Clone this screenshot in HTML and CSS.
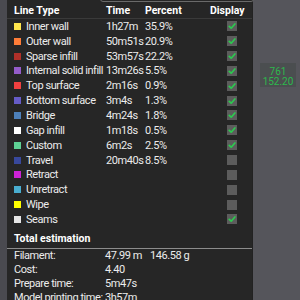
FILE: index.html
```html
<!DOCTYPE html>
<html>
<head>
<meta charset="utf-8">
<link rel="stylesheet" href="styles.css">
</head>
<body>
<div class="page">
  <div class="strip"></div>
  <div class="panel">
    <div class="combo"></div>
    <div class="grid head">
      <div>Line Type</div><div>Time</div><div>Percent</div><div>Display</div>
    </div>
    <div class="rows">
      <div class="grid row"><div class="name"><span class="sw" style="background:#FFE64D"></span>Inner wall</div><div>1h27m</div><div>35.9%</div><div><span class="cb on"><svg viewBox="0 0 10 10"><path d="M2.2 5.3 L4.2 7.2 L7.9 3"/></svg></span></div></div>
      <div class="grid row"><div class="name"><span class="sw" style="background:#FF7D38"></span>Outer wall</div><div>50m51s</div><div>20.9%</div><div><span class="cb on"><svg viewBox="0 0 10 10"><path d="M2.2 5.3 L4.2 7.2 L7.9 3"/></svg></span></div></div>
      <div class="grid row"><div class="name"><span class="sw" style="background:#B03029"></span>Sparse infill</div><div>53m57s</div><div>22.2%</div><div><span class="cb on"><svg viewBox="0 0 10 10"><path d="M2.2 5.3 L4.2 7.2 L7.9 3"/></svg></span></div></div>
      <div class="grid row"><div class="name"><span class="sw" style="background:#945CC9"></span>Internal solid infill</div><div>13m26s</div><div>5.5%</div><div><span class="cb on"><svg viewBox="0 0 10 10"><path d="M2.2 5.3 L4.2 7.2 L7.9 3"/></svg></span></div></div>
      <div class="grid row"><div class="name"><span class="sw" style="background:#F04040"></span>Top surface</div><div>2m16s</div><div>0.9%</div><div><span class="cb on"><svg viewBox="0 0 10 10"><path d="M2.2 5.3 L4.2 7.2 L7.9 3"/></svg></span></div></div>
      <div class="grid row"><div class="name"><span class="sw" style="background:#665CC7"></span>Bottom surface</div><div>3m4s</div><div>1.3%</div><div><span class="cb on"><svg viewBox="0 0 10 10"><path d="M2.2 5.3 L4.2 7.2 L7.9 3"/></svg></span></div></div>
      <div class="grid row"><div class="name"><span class="sw" style="background:#4D80BA"></span>Bridge</div><div>4m24s</div><div>1.8%</div><div><span class="cb on"><svg viewBox="0 0 10 10"><path d="M2.2 5.3 L4.2 7.2 L7.9 3"/></svg></span></div></div>
      <div class="grid row"><div class="name"><span class="sw" style="background:#FFFFFF"></span>Gap infill</div><div>1m18s</div><div>0.5%</div><div><span class="cb on"><svg viewBox="0 0 10 10"><path d="M2.2 5.3 L4.2 7.2 L7.9 3"/></svg></span></div></div>
      <div class="grid row"><div class="name"><span class="sw" style="background:#5ED194"></span>Custom</div><div>6m2s</div><div>2.5%</div><div><span class="cb on"><svg viewBox="0 0 10 10"><path d="M2.2 5.3 L4.2 7.2 L7.9 3"/></svg></span></div></div>
      <div class="grid row"><div class="name"><span class="sw" style="background:#38489B"></span>Travel</div><div>20m40s</div><div>8.5%</div><div><span class="cb"></span></div></div>
      <div class="grid row"><div class="name"><span class="sw" style="background:#CD22D6"></span>Retract</div><div></div><div></div><div><span class="cb"></span></div></div>
      <div class="grid row"><div class="name"><span class="sw" style="background:#49ADCF"></span>Unretract</div><div></div><div></div><div><span class="cb"></span></div></div>
      <div class="grid row"><div class="name"><span class="sw" style="background:#FFFF00"></span>Wipe</div><div></div><div></div><div><span class="cb"></span></div></div>
      <div class="grid row"><div class="name"><span class="sw" style="background:#E6E6E6"></span>Seams</div><div></div><div></div><div><span class="cb on"><svg viewBox="0 0 10 10"><path d="M2.2 5.3 L4.2 7.2 L7.9 3"/></svg></span></div></div>
    </div>
    <div class="total-title">Total estimation</div>
    <div class="stats">
      <div class="stat"><div>Filament:</div><div>47.99 m</div><div>146.58 g</div></div>
      <div class="stat"><div>Cost:</div><div>4.40</div><div></div></div>
      <div class="stat"><div>Prepare time:</div><div>5m47s</div><div></div></div>
      <div class="stat"><div>Model printing time:</div><div>3h57m</div><div></div></div>
    </div>
  </div>
  <div class="canvas">
    <div class="badge"><div>761</div><div>152.20</div></div>
  </div>
</div>
</body>
</html>
```
FILE: styles.css
```css
html, body {
  margin: 0;
  padding: 0;
}
body {
  width: 300px;
  height: 300px;
  overflow: hidden;
  background: #55555b;
  font-family: Roboto, "Liberation Sans", sans-serif;
  font-size: 11px;
  letter-spacing: -0.45px;
  color: #ececec;
}
.page {
  display: flex;
  height: 300px;
}
.strip {
  width: 7px;
  background: #4a4a50;
  flex: none;
}
.panel {
  width: 246px;
  flex: none;
  background: #262626;
  position: relative;
  padding-top: 3px;
  box-sizing: border-box;
  border-right: 1px solid #222;
}
.combo {
  position: absolute;
  top: -20px;
  left: 93px;
  width: 152px;
  height: 20px;
  border: 1px solid #6a6a6a;
  border-radius: 3px;
  background: #262626;
}
.grid {
  display: grid;
  grid-template-columns: 92px 39px 65px 43px;
  padding-left: 7px;
  align-items: center;
}
.head {
  height: 15px;
  font-size: 10.5px;
  font-weight: bold;
  color: #ffffff;
  letter-spacing: 0;
  border-bottom: 1px solid #3a3a3a;
}
.row {
  height: 14.85px;
  white-space: nowrap;
}
.name {
  display: flex;
  align-items: center;
}
.sw {
  width: 7px;
  height: 7px;
  margin-right: 5px;
  flex: none;
}
.cb {
  display: block;
  width: 10px;
  height: 10px;
  margin-left: 17px;
  background: #5c5c5c;
}
.cb svg {
  display: block;
  width: 10px;
  height: 10px;
}
.cb path {
  fill: none;
  stroke: #2ccb4f;
  stroke-width: 1.7;
  stroke-linecap: round;
  stroke-linejoin: round;
}
.total-title {
  padding: 5.5px 0 1.5px 7px;
  height: 14px;
  line-height: 14px;
  font-size: 10.5px;
  font-weight: bold;
  color: #ffffff;
  letter-spacing: 0;
  border-bottom: 1px solid #8c8c8c;
}
.stat {
  display: grid;
  grid-template-columns: 91px 45px 1fr;
  padding-left: 7px;
  height: 14px;
  line-height: 14px;
  white-space: nowrap;
}
.canvas {
  flex: 1;
  padding: 63px 0 0 7px;
}
.badge {
  width: 36px;
  height: 24px;
  box-sizing: border-box;
  padding-top: 3.5px;
  background: #4b4e50;
  color: #2db84d;
  text-align: center;
  font-size: 10px;
  line-height: 10px;
  letter-spacing: 0;
}
```
